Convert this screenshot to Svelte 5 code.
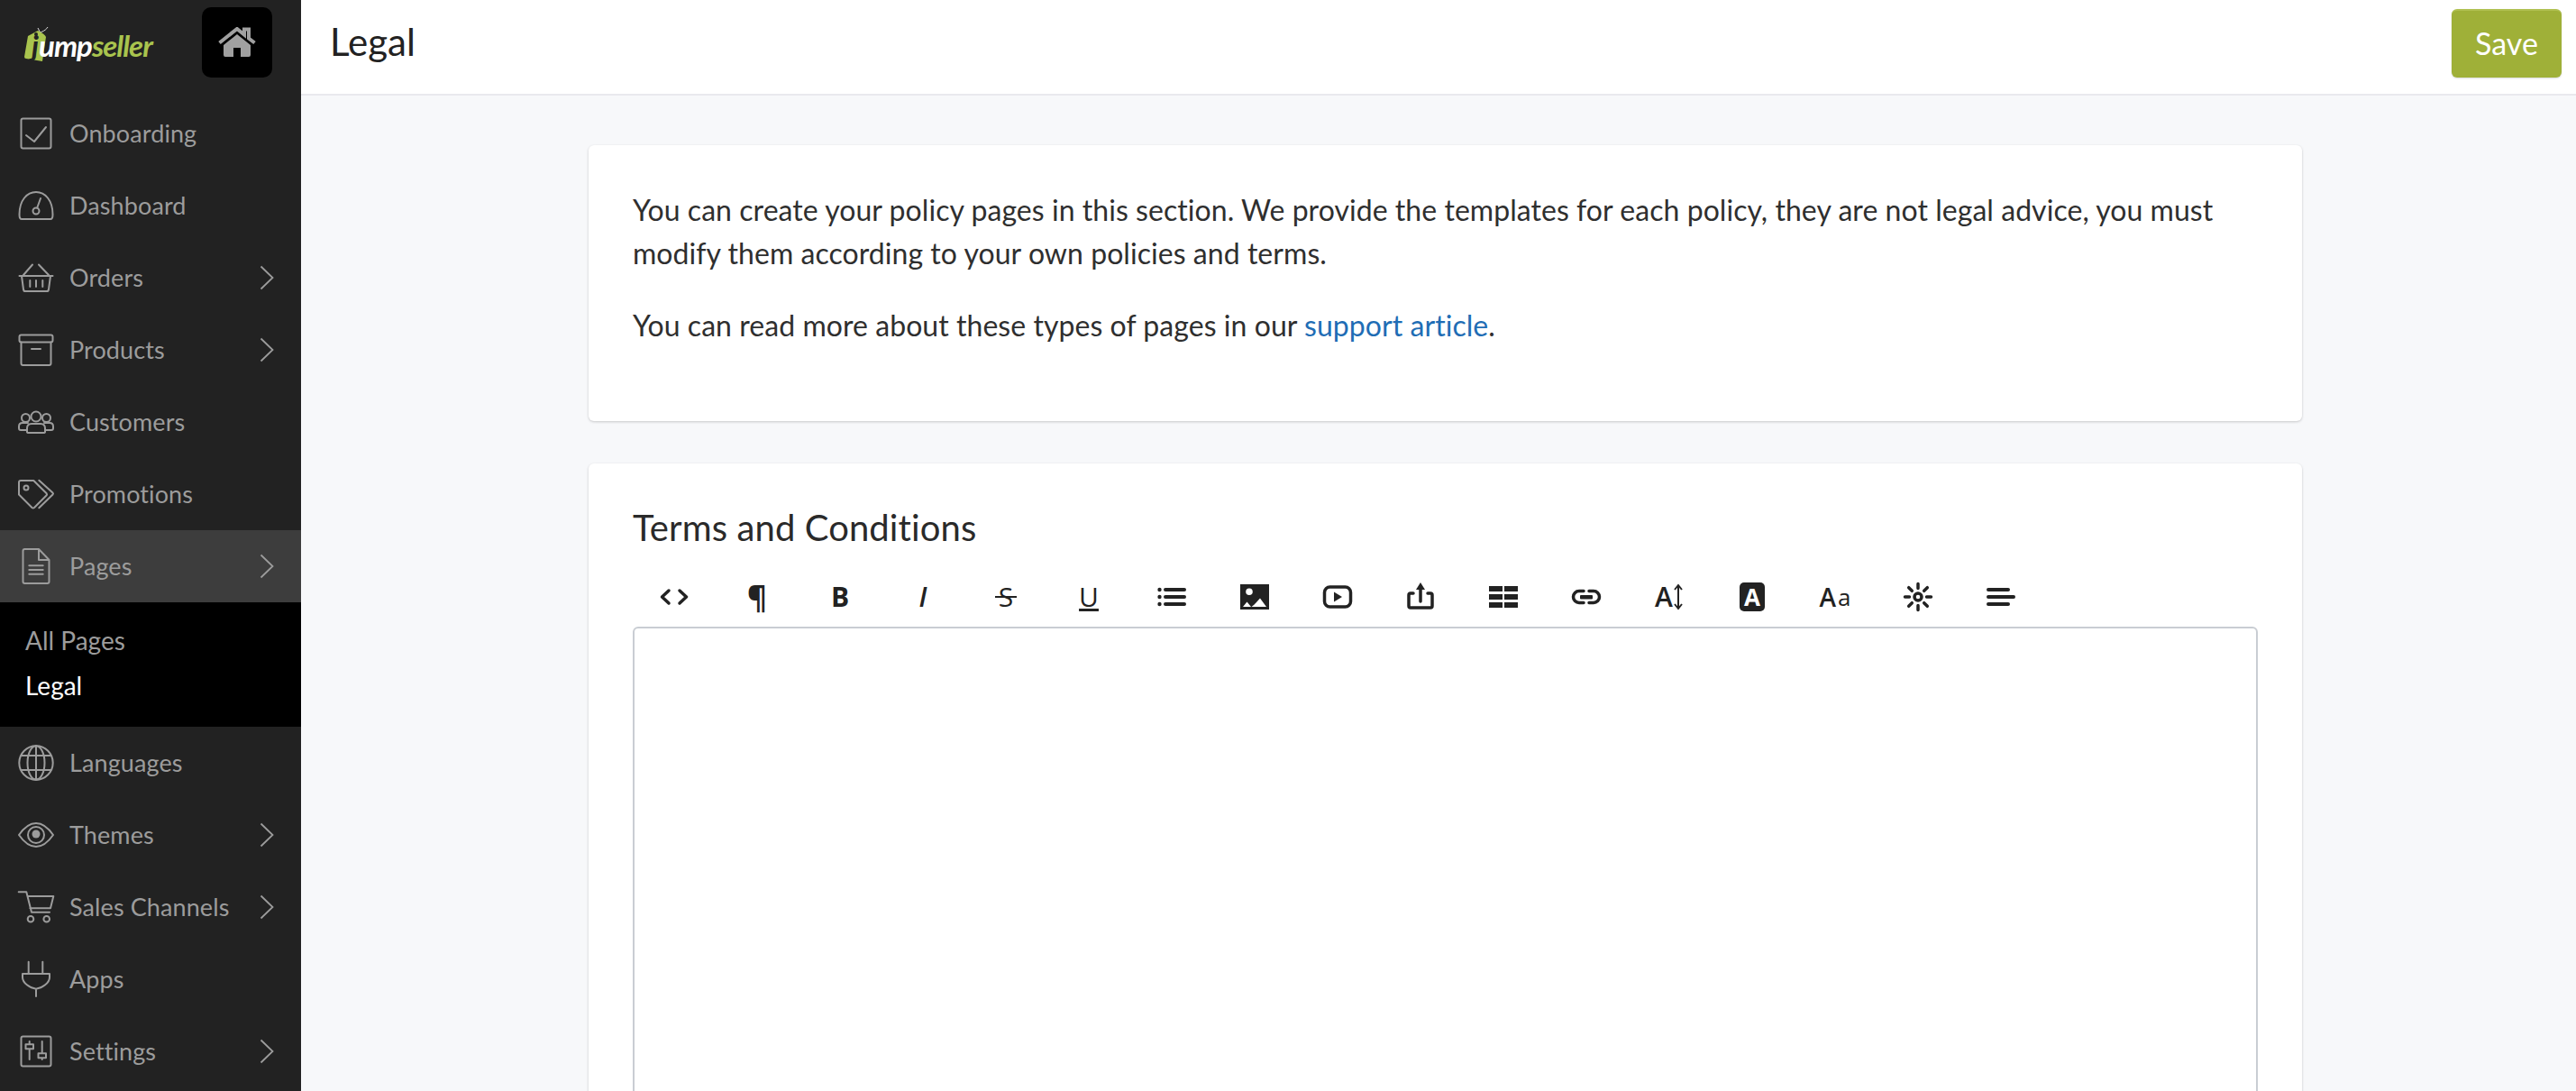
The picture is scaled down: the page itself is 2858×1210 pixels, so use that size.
<script>
  // sidebar entries: icon markup is drawn on a 40x40 box
  const nav = [
    { label: 'Onboarding', icon: '<rect x="3.5" y="3.5" width="33" height="33" rx="2"/><path d="M9 22l9 7 13-16"/>' },
    { label: 'Dashboard', icon: '<path d="M4 35H36Q38.5 35 38.5 30C38.5 14 30 5 20 5S1.5 14 1.5 30Q1.5 35 4 35Z"/><circle cx="20" cy="26" r="3.5"/><path d="M21.2 22.5L25 12"/>' },
    { label: 'Orders', more: true, icon: '<path d="M1.5 18H38.5M4 18L6 33Q6.3 35 8 35H32Q33.7 35 34 33L36 18M6 17L16 5.5M34 17L23 5.5M13.3 23V30M20 23V30M27.3 23V30"/>' },
    { label: 'Products', more: true, icon: '<rect x="1.5" y="3.5" width="37" height="8" rx="2"/><path d="M3.5 11.5V35Q3.5 37 5.5 37H34.5Q36.5 37 36.5 35V11.5M15 19H25"/>' },
    { label: 'Customers', icon: '<circle cx="20" cy="14" r="5.5"/><path d="M10 31V27Q10 22 15 22H25Q30 22 30 27V31Q30 32 28 32H12Q10 32 10 31Z"/><circle cx="8.5" cy="15.5" r="4.5"/><circle cx="31.5" cy="15.5" r="4.5"/><path d="M10 29H3Q1 29 1 27V25Q1 21 5 21H11M30 29H37Q39 29 39 27V25Q39 21 35 21H29"/>' },
    { label: 'Promotions', icon: '<path d="M3 5H17.3L31.7 19.3Q32.5 20.3 31.7 21.3L18 35Q16.7 36 15.5 35L1 20.5V7Q1 5 3 5Z"/><circle cx="9" cy="13" r="2.5"/><path d="M23.3 4.7L38.5 18.5Q39.5 19.5 38.5 20.5L23.3 35.3"/>' },
    { label: 'Pages', more: true, active: true, icon: '<path d="M7.5 1H23L34.5 13V37Q34.5 39 32.5 39H7.5Q5.5 39 5.5 37V3Q5.5 1 7.5 1ZM23 1V13H34.5M12.3 19.3H27.7M12.3 24H27.7M12.3 28.7H27.7"/>', sub: ['All Pages', 'Legal'] },
    { label: 'Languages', icon: '<circle cx="20" cy="20" r="18.7"/><ellipse cx="20" cy="20" rx="9.5" ry="18.7"/><path d="M20 1.3V38.7M4 12H36M4 28H36"/>' },
    { label: 'Themes', more: true, icon: '<path d="M1 20C8 10 14 7 20 7S32 10 39 20C32 30 26 33 20 33S8 30 1 20Z"/><circle cx="20" cy="20" r="9"/><circle class="solid" cx="20" cy="19" r="4.5"/>' },
    { label: 'Sales Channels', more: true, icon: '<path d="M.7 3.3H9.3L15 25.7H35M10.7 8H39.3L36 21.3H13.3"/><circle cx="14" cy="33.3" r="3.3"/><circle cx="31.7" cy="33.3" r="3.3"/>' },
    { label: 'Apps', icon: '<path d="M11.7 .7V14M27.3 .7V14M5 14H35V18C35 24 27 30 20 30.7 13 30 5 24 5 18ZM20 30.7V39"/>' },
    { label: 'Settings', more: true, icon: '<rect x="3.5" y="3.5" width="33" height="33" rx="2"/><path d="M12.7 9V12.3M12.7 17.3V29M26.7 9V22.3M26.7 27.3V29M8.5 12.3H17V17.3H8.5ZM22.5 22.3H31V27.3H22.5Z"/>' }
  ];
</script>

<div class="shell">
  <aside class="sidebar">
    <div class="brand">
      <div class="logo">
        <svg class="tag" width="28" height="42" viewBox="0 0 28 42">
          <path class="string" d="M14 9C18 7 24 6 27 1M19 8L16 2" />
          <path class="tag-body" d="M5 11L16 5Q24 9 25 12L21 39L3 36Q1 36 1 34Z" />
          <circle class="tag-hole" cx="14" cy="9" r="2" />
        </svg>
        <span class="wordmark"><span class="dark">j</span><span class="white">ump</span><span class="green">seller</span></span>
      </div>
      <div class="home">
        <svg width="42" height="34" viewBox="0 0 42 34">
          <path d="M21 8L6 20V31Q6 33 8 33H17V23H25V33H34Q36 33 36 31V20Z" />
          <path d="M1.5 17.5L21 2L29 8.5V2.5H34V12.5L40.5 17.5" class="roof" />
        </svg>
      </div>
    </div>

    <nav>
      {#each nav as item}
        <div class="item" class:active={item.active}>
          <svg class="icon" width="40" height="40" viewBox="0 0 40 40">{@html item.icon}</svg>
          <span class="label">{item.label}</span>
          {#if item.more}
            <svg class="chevron" width="16" height="28" viewBox="0 0 16 28"><path d="M1.5 1.5L14.5 14L1.5 26.5" /></svg>
          {/if}
        </div>
        {#if item.sub}
          <div class="submenu">
            {#each item.sub as link, i}
              <div class="sublink" class:current={i === 1}>{link}</div>
            {/each}
          </div>
        {/if}
      {/each}
    </nav>
  </aside>

  <main>
    <header class="topbar">
      <h1>Legal</h1>
      <button class="save">Save</button>
    </header>

    <div class="content">
      <section class="card intro">
        <p>You can create your policy pages in this section. We provide the templates for each policy, they are not legal advice, you must modify them according to your own policies and terms.</p>
        <p>You can read more about these types of pages in our <a href="#support">support article</a>.</p>
      </section>

      <section class="card terms">
        <h2>Terms and Conditions</h2>
        <div class="toolbar">
          <span class="tool">
            <svg class="stroke" width="36" height="36" viewBox="0 0 36 36"><path d="M12 11L4.5 18L12 25M24 11L31.5 18L24 25" /></svg>
          </span>
          <span class="tool glyph pilcrow">¶</span>
          <span class="tool glyph bold">B</span>
          <span class="tool glyph italic">I</span>
          <span class="tool glyph strike">S</span>
          <span class="tool glyph under">U</span>
          <span class="tool">
            <svg width="36" height="36" viewBox="0 0 36 36">
              <circle cx="4.5" cy="10" r="2.2" /><circle cx="4.5" cy="18" r="2.2" /><circle cx="4.5" cy="26" r="2.2" />
              <rect x="9" y="8" width="25" height="4" rx="2" /><rect x="9" y="16" width="25" height="4" rx="2" /><rect x="9" y="24" width="25" height="4" rx="2" />
            </svg>
          </span>
          <span class="tool">
            <svg width="36" height="36" viewBox="0 0 36 36">
              <path d="M2 4H34V32H2ZM12 8.500A3.800 3.800 0 1 0 12 16.100A3.800 3.800 0 1 0 12 8.500ZM5 29H14L9.500 23.500ZM14.500 29H31L24 19.500L19.500 24.500L17 27Z" fill-rule="evenodd" />
            </svg>
          </span>
          <span class="tool">
            <svg width="36" height="36" viewBox="0 0 36 36">
              <rect class="outline" x="3.500" y="7" width="29" height="22" rx="6" />
              <path d="M14 12.500L23 18L14 23.500Z" />
            </svg>
          </span>
          <span class="tool">
            <svg width="36" height="36" viewBox="0 0 36 36">
              <path class="outline" d="M10 14H7Q5 14 5 16V28Q5 30 7 30H29Q31 30 31 28V16Q31 14 29 14H26M18 9V23" />
              <path d="M18 2L23 10H13Z" />
            </svg>
          </span>
          <span class="tool">
            <svg width="36" height="36" viewBox="0 0 36 36">
              <path d="M2 6H17V12H2ZM19 6H34V12H19ZM2 15H17V21H2ZM19 15H34V21H19ZM2 24H17V30H2ZM19 24H34V30H19Z" />
            </svg>
          </span>
          <span class="tool">
            <svg width="36" height="36" viewBox="0 0 36 36">
              <path class="outline" d="M15 11.500H10A6.500 6.500 0 0 0 10 24.500H15M21 11.500H26A6.500 6.500 0 0 1 26 24.500H21" />
              <rect x="11" y="16" width="14" height="4.500" rx="1" />
            </svg>
          </span>
          <span class="tool glyph size">A<svg width="12" height="30" viewBox="0 0 12 30"><path class="thin" d="M6 2V28M2 7L6 2L10 7M2 23L6 28L10 23" /></svg></span>
          <span class="tool"><span class="boxed">A</span></span>
          <span class="tool glyph case">A<small>a</small></span>
          <span class="tool">
            <svg width="36" height="36" viewBox="0 0 36 36">
              <circle class="outline thin-ring" cx="18" cy="18" r="4" />
              <g class="rays"><path d="M18 3.500V8.500M18 27.500V32.500M3.500 18H8.500M27.500 18H32.500M7.700 7.700L11.300 11.300M24.700 24.700L28.300 28.300M28.300 7.700L24.700 11.300M11.300 24.700L7.700 28.300" /></g>
            </svg>
          </span>
          <span class="tool">
            <svg width="36" height="36" viewBox="0 0 36 36">
              <rect x="2" y="8" width="26" height="4" rx="2" /><rect x="2" y="16" width="32" height="4" rx="2" /><rect x="2" y="24" width="26" height="4" rx="2" />
            </svg>
          </span>
        </div>
        <div class="editor"></div>
      </section>
    </div>
  </main>
</div>

<style>
  :global(body) {
    margin: 0;
    background: #f7f8fa;
    font-family: 'Lato', 'Open Sans', sans-serif;
    overflow: hidden;
  }

  .shell {
    display: flex;
    height: 1210px;
    overflow: hidden;
  }

  .sidebar {
    width: 334px;
    flex: none;
    background: #222;
    color: #9c9c9c;
  }

  .brand {
    height: 108px;
    display: flex;
    align-items: flex-start;
    justify-content: space-between;
    padding: 8px 32px 0 26px;
    box-sizing: border-box;
  }

  .logo {
    display: flex;
    align-items: center;
    margin-top: 21px;
  }

  .tag-body { fill: #a9c44e; }
  .tag-hole { fill: #222; }
  .string { fill: none; stroke: #ddd; stroke-width: 1; }

  .wordmark {
    margin-left: -19px;
    font-size: 33px;
    font-weight: 700;
    font-style: italic;
    letter-spacing: -1px;
  }
  .dark { color: #222; }
  .white { color: #fff; margin-left: 1px; }
  .green { color: #a9c44e; }

  .home {
    width: 78px;
    height: 78px;
    background: #000;
    border-radius: 10px;
    display: flex;
    align-items: center;
    justify-content: center;
  }
  .home svg { fill: #a0a0a0; }
  .home .roof { fill: none; stroke: #a0a0a0; stroke-width: 4; }

  .item {
    height: 80px;
    display: flex;
    align-items: center;
    padding: 0 30px 0 20px;
    box-sizing: border-box;
  }
  .item.active { background: #3d3d3d; }

  .icon {
    flex: none;
    fill: none;
    stroke: #9c9c9c;
    stroke-width: 2;
    stroke-linecap: round;
    stroke-linejoin: round;
    overflow: visible;
  }
  .icon :global(.solid) { fill: #9c9c9c; stroke: none; }

  .label {
    margin: 0 0 1px 17px;
    flex: 1;
    font-size: 27px;
    letter-spacing: 0.1px;
    white-space: nowrap;
  }

  .chevron { fill: none; stroke: #9c9c9c; stroke-width: 1.800; flex: none; }

  .submenu {
    height: 138px;
    background: #000;
    padding-top: 17px;
    box-sizing: border-box;
  }
  .sublink {
    height: 50px;
    line-height: 50px;
    padding-left: 28px;
    font-size: 28px;
  }
  .sublink.current { color: #fff; }

  main {
    flex: 1;
    min-width: 0;
  }

  .topbar {
    height: 106px;
    box-sizing: border-box;
    background: #fff;
    border-bottom: 2px solid #e9e9ee;
    display: flex;
    align-items: flex-start;
    justify-content: space-between;
    padding: 10px 16px 0 32px;
  }

  h1 {
    margin: 5px 0 0;
    font-size: 42px;
    line-height: 62px;
    font-weight: 400;
    color: #222;
  }

  .save {
    width: 122px;
    height: 76px;
    border: none;
    border-top: 2px solid #b0c050;
    border-radius: 6px;
    background: #9fb038;
    color: #fff;
    font: inherit;
    font-size: 34px;
    padding: 0 0 4px;
    box-shadow: 0 1px 2px rgba(0, 0, 0, 0.15);
  }

  .content {
    width: 1901px;
    margin: 55px auto 0 319px;
  }

  .card {
    background: #fff;
    border-radius: 6px;
    box-shadow: 0 1px 3px rgba(0, 0, 0, 0.2);
    padding: 0 49px;
    box-sizing: border-box;
    color: #2f2f2f;
  }

  .intro {
    height: 306px;
    padding-top: 48px;
    font-size: 32px;
    letter-spacing: 0.05px;
    line-height: 48px;
    margin-bottom: 47px;
  }
  .intro p { margin: 0 0 32px; }
  .intro a { color: #1f6db5; text-decoration: none; }

  h2 {
    margin: 0;
    padding-top: 45px;
    font-size: 40px;
    letter-spacing: 0.1px;
    line-height: 52px;
    font-weight: 400;
    color: #2a2a2a;
  }

  .toolbar {
    display: flex;
    height: 84px;
    padding-top: 18px;
    box-sizing: border-box;
    align-items: center;
  }

  .tool {
    width: 92px;
    height: 36px;
    flex: none;
    display: flex;
    align-items: center;
    justify-content: center;
    color: #222;
  }
  .tool svg { fill: #222; }
  .tool .stroke, .tool .outline, .tool .rays {
    fill: none;
    stroke: #222;
    stroke-width: 3.500;
    stroke-linecap: round;
    stroke-linejoin: round;
  }
  .tool .thin { fill: none; stroke: #222; stroke-width: 2; }

  .glyph { font-family: 'Open Sans', sans-serif; font-size: 30px; line-height: 36px; }
  .pilcrow { font-weight: 700; font-size: 34px; }
  .bold { font-weight: 700; }
  .italic { font-weight: 600; font-style: italic; }
  .strike { position: relative; font-weight: 400; }
  .strike::after {
    content: '';
    position: absolute;
    left: 34px;
    width: 24px;
    top: 17px;
    height: 2px;
    background: #222;
  }
  .under { text-decoration: underline; font-weight: 400; }
  .size, .case { font-weight: 600; }
  .case { font-size: 28px; }
  .case small { font-size: 26px; font-weight: 400; margin-left: 2px; align-self: flex-end; }

  .boxed {
    width: 28px;
    height: 32px;
    border-radius: 5px;
    background: #222;
    color: #fff;
    font-family: 'Open Sans', sans-serif;
    font-weight: 700;
    font-size: 26px;
    line-height: 32px;
    text-align: center;
  }

  .editor {
    height: 600px;
    border: 2px solid #c9cdd3;
    border-radius: 6px;
    box-sizing: border-box;
  }
</style>
